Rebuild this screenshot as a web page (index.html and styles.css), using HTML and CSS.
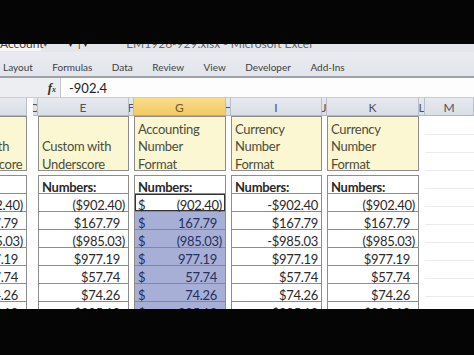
FILE: index.html
```html
<!DOCTYPE html>
<html lang="en">
<head>
    <meta charset="UTF-8">
    <title>EM1926-929.xlsx - Microsoft Excel</title>
    <link rel="stylesheet" href="styles.css">
</head>
<body>
    <div class="band"></div>

    <div class="titlebar">
        <div class="titlebar-row">
            <span class="qat-box">Account</span>
            <span class="qat-arrow">▾</span>
            <span class="qat-tools">▾ &nbsp;|&nbsp;▾</span>
            <span class="doc-title">EM1926-929.xlsx - Microsoft Excel</span>
        </div>
    </div>

    <div class="ribbon-tabs">
        <span class="tab">Layout</span>
        <span class="tab">Formulas</span>
        <span class="tab">Data</span>
        <span class="tab">Review</span>
        <span class="tab">View</span>
        <span class="tab">Developer</span>
        <span class="tab">Add-Ins</span>
    </div>

    <div class="formula-bar">
        <div class="fx-area"><span class="fx"><i>f</i><small>x</small></span></div>
        <div class="formula-input">-902.4</div>
    </div>

    <div class="sheet">
        <!-- C (cut off on the left) -->
        <div class="col col-c">
            <div class="col-c-inner">
                <div class="letter">C</div>
                <div class="title">
                    <span>&nbsp;</span>
                    <span>Custom with</span>
                    <span>No Underscore</span>
                </div>
                <div class="spacer"></div>
                <div class="list">
                    <div class="cell bold">Numbers:</div>
                    <div class="cell num">($902.40)</div>
                    <div class="cell num pos">$167.79</div>
                    <div class="cell num">($985.03)</div>
                    <div class="cell num pos">$977.19</div>
                    <div class="cell num pos">$57.74</div>
                    <div class="cell num pos">$74.26</div>
                    <div class="cell num pos">$895.19</div>
                </div>
            </div>
        </div>

        <div class="col narrow"><div class="letter">D</div></div>

        <!-- E -->
        <div class="col wide">
            <div class="letter">E</div>
            <div class="title">
                <span>Custom with</span>
                <span>Underscore</span>
            </div>
            <div class="spacer"></div>
            <div class="list">
                <div class="cell bold">Numbers:</div>
                <div class="cell num">($902.40)</div>
                <div class="cell num pos">$167.79</div>
                <div class="cell num">($985.03)</div>
                <div class="cell num pos">$977.19</div>
                <div class="cell num pos">$57.74</div>
                <div class="cell num pos">$74.26</div>
                <div class="cell num pos">$895.19</div>
            </div>
        </div>

        <div class="col narrow"><div class="letter">F</div></div>

        <!-- G (selected) -->
        <div class="col wide">
            <div class="letter selected">G</div>
            <div class="title">
                <span>Accounting</span>
                <span>Number</span>
                <span>Format</span>
            </div>
            <div class="spacer"></div>
            <div class="list">
                <div class="cell bold">Numbers:</div>
                <div class="cell acct active"><span>$</span><span>(902.40)</span></div>
                <div class="cell acct sel"><span>$</span><span class="pos">167.79</span></div>
                <div class="cell acct sel"><span>$</span><span>(985.03)</span></div>
                <div class="cell acct sel"><span>$</span><span class="pos">977.19</span></div>
                <div class="cell acct sel"><span>$</span><span class="pos">57.74</span></div>
                <div class="cell acct sel"><span>$</span><span class="pos">74.26</span></div>
                <div class="cell acct sel"><span>$</span><span class="pos">895.19</span></div>
            </div>
        </div>

        <div class="col narrow"><div class="letter">H</div></div>

        <!-- I -->
        <div class="col wide">
            <div class="letter">I</div>
            <div class="title">
                <span>Currency</span>
                <span>Number</span>
                <span>Format</span>
            </div>
            <div class="spacer"></div>
            <div class="list">
                <div class="cell bold">Numbers:</div>
                <div class="cell num">-$902.40</div>
                <div class="cell num">$167.79</div>
                <div class="cell num">-$985.03</div>
                <div class="cell num">$977.19</div>
                <div class="cell num">$57.74</div>
                <div class="cell num">$74.26</div>
                <div class="cell num">$895.19</div>
            </div>
        </div>

        <div class="col narrow"><div class="letter">J</div></div>

        <!-- K -->
        <div class="col wide">
            <div class="letter">K</div>
            <div class="title">
                <span>Currency</span>
                <span>Number</span>
                <span>Format</span>
            </div>
            <div class="spacer"></div>
            <div class="list">
                <div class="cell bold">Numbers:</div>
                <div class="cell num">($902.40)</div>
                <div class="cell num pos">$167.79</div>
                <div class="cell num">($985.03)</div>
                <div class="cell num pos">$977.19</div>
                <div class="cell num pos">$57.74</div>
                <div class="cell num pos">$74.26</div>
                <div class="cell num pos">$895.19</div>
            </div>
        </div>

        <div class="col narrow narrow-l"><div class="letter">L</div></div>

        <div class="col col-m">
            <div class="letter">M</div>
            <div class="grid-fill"></div>
        </div>
    </div>

    <div class="band band-bottom"></div>
</body>
</html>
```

FILE: styles.css
```css
body {
    margin: 0;
    padding: 0;
    width: 474px;
    height: 355px;
    overflow: hidden;
    background-color: #050505;
    font-family: 'Lato', 'Liberation Sans', sans-serif;
}

.band {
    height: 44px;
    background-color: #050505;
}

.band-bottom {
    height: 44px;
}

/* title bar, top half hidden under the black band */
.titlebar {
    height: 8px;
    overflow: hidden;
    background-color: #e4e6ea;
}

.titlebar-row {
    display: flex;
    align-items: center;
    height: 14px;
    margin-top: -8px;
    font-size: 12px;
    color: #555;
}

.qat-box {
    background-color: #f6f6f6;
    padding: 0 3px 0 0;
    width: 38px;
    color: #444;
}

.qat-arrow {
    margin-left: 2px;
    font-size: 9px;
}

.qat-tools {
    margin-left: 20px;
    font-size: 10px;
    color: #222;
}

.doc-title {
    margin-left: 38px;
    color: #666;
}

.ribbon-tabs {
    display: flex;
    align-items: center;
    gap: 19.5px;
    height: 26px;
    padding: 6px 0 0 3px;
    box-sizing: border-box;
    background: linear-gradient(#e9ebf0, #e2e5eb);
    border-bottom: 2px solid #9da2aa;
    font-size: 10px;
    color: #3e3e44;
}

.formula-bar {
    display: flex;
    height: 20px;
    background-color: #eceef2;
    border-bottom: 1px solid #c9cdd3;
    box-sizing: border-box;
}

.fx-area {
    width: 61px;
    display: flex;
    justify-content: flex-end;
    align-items: center;
    padding-right: 4px;
    box-sizing: border-box;
    border-right: 1px solid #c2c6cc;
}

.fx {
    font-family: 'Liberation Serif', serif;
    font-size: 13px;
    color: #333;
    font-weight: bold;
}

.fx small {
    font-size: 8px;
    font-style: italic;
}

.formula-input {
    flex: 1;
    background-color: #fdfdfd;
    padding: 1px 0 0 8px;
    font-size: 13px;
    line-height: 18px;
    color: #222;
}

/* worksheet */
.sheet {
    display: flex;
    height: 211px;
    overflow: hidden;
    background-color: #fff;
}

.col {
    display: flex;
    flex-direction: column;
    flex-shrink: 0;
}

.col > div,
.col-c-inner > div {
    flex-shrink: 0;
}

.col-c {
    width: 33px;
    overflow: hidden;
}

.col-c-inner {
    width: 91px;
    margin-left: -64px;
}

.wide {
    width: 91px;
}

.wide:nth-child(5),
.wide:nth-child(9) {
    width: 92px;
}

.narrow {
    width: 5px;
    overflow: hidden;
}

.narrow-l {
    width: 6px;
}

.col-m {
    flex: 1;
}

.letter {
    height: 18px;
    display: flex;
    justify-content: center;
    align-items: center;
    padding-top: 2px;
    box-sizing: border-box;
    background: linear-gradient(#e6e9ef, #dadee6);
    border-right: 1px solid #b9bfc9;
    border-bottom: 1px solid #b2b8c2;
    font-size: 12px;
    color: #4f5258;
    overflow: hidden;
}

.letter.selected {
    background: linear-gradient(#f9dc8c, #f4c964);
    border-bottom-color: #d9a640;
    color: #6a5a3a;
}

.title {
    height: 55px;
    box-sizing: border-box;
    display: flex;
    flex-direction: column;
    justify-content: flex-end;
    padding: 0 3px;
    background-color: #fbf7d2;
    border: 1px solid #8d8d8d;
    font-size: 13px;
    letter-spacing: -0.3px;
    line-height: 17.5px;
    color: #4d4d3c;
    white-space: nowrap;
}

.title span:last-child {
    margin-bottom: -3px;
}

.col-c .title {
    border-left-color: transparent;
}

.spacer {
    height: 4px;
}

.list {
    border: 1px solid #8d8d8d;
    border-bottom: none;
}

.cell {
    height: 18px;
    box-sizing: border-box;
    padding: 4px 3px 0;
    border-bottom: 1px solid #8d8d8d;
    font-size: 13px;
    letter-spacing: -0.3px;
    line-height: 14px;
    color: #2a2a2a;
    white-space: nowrap;
}

.bold {
    font-weight: bold;
}

.num {
    text-align: right;
}

.num.pos {
    padding-right: 8px;
}

.acct {
    display: flex;
    justify-content: space-between;
}

.acct .pos {
    padding-right: 5px;
}

.acct.active {
    box-shadow: inset 0 0 0 1px #333;
}

.acct.sel {
    background-color: #a8afd7;
    color: #26305e;
    border-bottom-color: #7e86ad;
}

.grid-fill {
    flex: 1;
    background: repeating-linear-gradient(#fff 0 17px, #ebebeb 17px 18px);
    background-position: 0 1px;
}
```
